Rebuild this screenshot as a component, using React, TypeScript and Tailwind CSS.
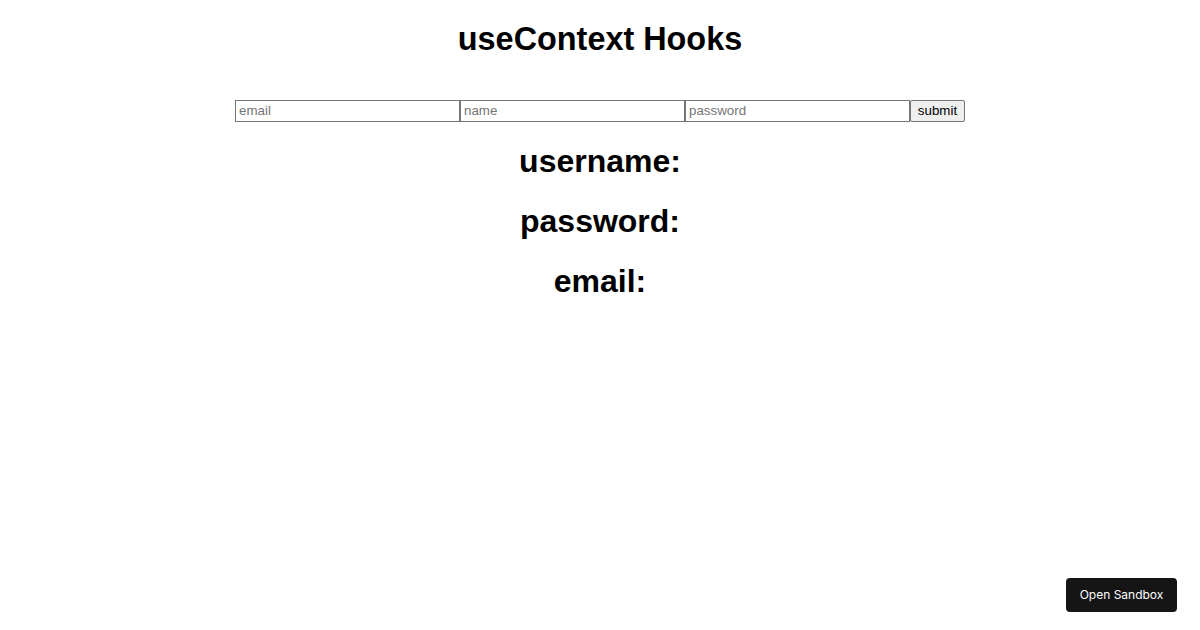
import React from 'react';

const fields = [
    { id: 'email', type: 'email', placeholder: 'email' },
    { id: 'name', type: 'text', placeholder: 'name' },
    { id: 'password', type: 'password', placeholder: 'password' },
];

const App: React.FC = () => {
    return (
        <div className="min-h-[630px] bg-white text-center text-black font-['Liberation_Sans',Arial,sans-serif]">
            <h1 className="pt-[21px] text-[32.4px] leading-[37px] font-bold">useContext Hooks</h1>

            <form className="mt-[42px] flex justify-center" onSubmit={e => e.preventDefault()}>
                {fields.map(f => (
                    <input
                        key={f.id}
                        type={f.type}
                        placeholder={f.placeholder}
                        className="w-[225px] h-[22px] pl-[3px] pr-[2px] pb-[1px] border border-[#767676] text-[13.33px] placeholder:text-[#757575] outline-none"
                    />
                ))}
                <button
                    type="submit"
                    className="w-[55px] h-[22px] border border-[#767676] rounded-[2px] bg-[#efefef] text-[13.33px] leading-none"
                >
                    submit
                </button>
            </form>

            <div className="mt-[21px] flex flex-col gap-[23px]">
                <h2 className="text-[32px] leading-[37px] font-bold">username:</h2>
                <h2 className="text-[32px] leading-[37px] font-bold">password:</h2>
                <h2 className="text-[32px] leading-[37px] font-bold">email:</h2>
            </div>

            <button className="fixed right-[23px] bottom-[18px] w-[111px] h-[34px] rounded-[4px] bg-[#151515] text-white text-[12px] font-['Inter',sans-serif]">
                Open Sandbox
            </button>
        </div>
    );
};

export default App;
